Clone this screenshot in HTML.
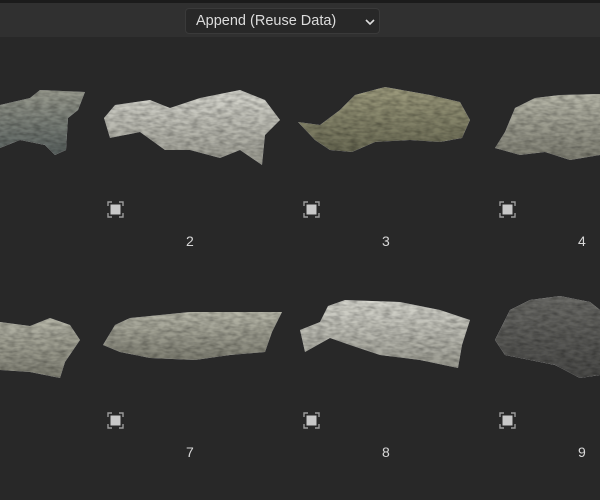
<!DOCTYPE html>
<html><head><meta charset="utf-8"><style>
html,body{margin:0;padding:0;width:600px;height:500px;overflow:hidden;background:#282828;font-family:"Liberation Sans","DejaVu Sans",sans-serif}
.top{position:absolute;left:0;top:0;width:600px;height:3px;background:#1b1b1b}
.hdr{position:absolute;left:0;top:3px;width:600px;height:34px;background:#303030}
.dd{position:absolute;left:185px;top:8px;width:195px;height:26px;background:#282828;border:1px solid #3a3a3a;border-radius:4px;box-sizing:border-box;color:#dcdcdc;font-size:14.5px;line-height:24px;padding-left:10px;white-space:nowrap}
.dd svg{position:absolute;right:4px;top:9px}
.ic{position:absolute;width:17px;height:17px}
.num{position:absolute;color:#d8d8d8;font-size:14px}
svg.t{position:absolute;left:0;top:0}
</style></head><body>
<div class="top"></div><div class="hdr"></div>
<div class="dd">Append (Reuse Data)<svg width="10" height="8"><path d="M1 2 L5 6 L9 2" stroke="#ddd" stroke-width="1.6" fill="none"/></svg></div>
<svg class="t" width="600" height="500">
<defs>
<linearGradient id="g1" x1="0" y1="0" x2="0" y2="1"><stop offset="0" stop-color="#9a9c90"/><stop offset="1" stop-color="#5a6260"/></linearGradient>
<linearGradient id="g2" x1="0" y1="0" x2="0" y2="1"><stop offset="0" stop-color="#d8d8d0"/><stop offset="1" stop-color="#9a9a90"/></linearGradient>
<linearGradient id="g3" x1="0" y1="0" x2="0" y2="1"><stop offset="0" stop-color="#9e9c7e"/><stop offset="1" stop-color="#6a6a54"/></linearGradient>
<linearGradient id="g4" x1="0" y1="0" x2="0" y2="1"><stop offset="0" stop-color="#b8b8aa"/><stop offset="1" stop-color="#7e7e72"/></linearGradient>
<linearGradient id="g5" x1="0" y1="0" x2="0" y2="1"><stop offset="0" stop-color="#6c6c68"/><stop offset="1" stop-color="#4a4a48"/></linearGradient>
<filter id="n" x="0" y="0" width="100%" height="100%"><feTurbulence type="fractalNoise" baseFrequency="0.12 0.3" numOctaves="2" seed="3" result="t"/><feColorMatrix in="t" type="matrix" values="0.9 0 0 0 0.35 0.9 0 0 0 0.35 0.9 0 0 0 0.35 0 0 0 0 1" result="c"/><feBlend in="SourceGraphic" in2="c" mode="multiply" result="b"/><feComposite in="b" in2="SourceAlpha" operator="in"/></filter>
</defs>
<g filter="url(#n)">
<path d="M0 105 L30 98 L40 90 L85 92 L78 110 L68 118 L66 150 L55 155 L45 145 L20 140 L0 148Z" fill="url(#g1)"/>
<path d="M104 118 L115 105 L150 100 L170 108 L200 98 L240 90 L265 100 L280 120 L265 135 L262 165 L240 150 L220 158 L190 150 L165 150 L140 132 L110 138Z" fill="url(#g2)"/>
<path d="M298 122 L320 125 L340 110 L355 95 L385 87 L430 95 L460 102 L470 120 L462 138 L440 142 L410 140 L375 142 L352 152 L330 150 L315 140Z" fill="url(#g3)"/>
<path d="M495 148 L505 132 L515 108 L535 98 L560 95 L600 94 L600 155 L570 160 L545 152 L520 155Z" fill="url(#g4)"/>
<path d="M0 322 L30 326 L50 318 L70 325 L80 340 L65 362 L60 378 L30 372 L0 370Z" fill="url(#g4)"/>
<path d="M103 345 L115 325 L130 318 L190 312 L240 312 L282 312 L272 332 L265 352 L230 355 L195 360 L150 358 L120 352Z" fill="url(#g4)"/>
<path d="M300 330 L320 322 L328 306 L345 300 L400 302 L440 310 L470 320 L462 345 L458 368 L420 360 L380 355 L350 345 L330 338 L305 352Z" fill="url(#g2)"/>
<path d="M495 340 L510 310 L530 300 L560 296 L590 302 L600 310 L600 375 L580 378 L555 365 L530 360 L505 355Z" fill="url(#g5)"/>
</g>
</svg>
<svg class="ic" style="left:107px;top:201px" viewBox="0 0 17 17"><path d="M1 5V1H5M12 1H16V5M16 12V16H12M5 16H1V12" stroke="#9a9a9a" stroke-width="1.4" fill="none"/><rect x="3.5" y="3.5" width="10" height="10" fill="#c8c8c8"/></svg>
<svg class="ic" style="left:303px;top:201px" viewBox="0 0 17 17"><path d="M1 5V1H5M12 1H16V5M16 12V16H12M5 16H1V12" stroke="#9a9a9a" stroke-width="1.4" fill="none"/><rect x="3.5" y="3.5" width="10" height="10" fill="#c8c8c8"/></svg>
<svg class="ic" style="left:499px;top:201px" viewBox="0 0 17 17"><path d="M1 5V1H5M12 1H16V5M16 12V16H12M5 16H1V12" stroke="#9a9a9a" stroke-width="1.4" fill="none"/><rect x="3.5" y="3.5" width="10" height="10" fill="#c8c8c8"/></svg>
<svg class="ic" style="left:107px;top:412px" viewBox="0 0 17 17"><path d="M1 5V1H5M12 1H16V5M16 12V16H12M5 16H1V12" stroke="#9a9a9a" stroke-width="1.4" fill="none"/><rect x="3.5" y="3.5" width="10" height="10" fill="#c8c8c8"/></svg>
<svg class="ic" style="left:303px;top:412px" viewBox="0 0 17 17"><path d="M1 5V1H5M12 1H16V5M16 12V16H12M5 16H1V12" stroke="#9a9a9a" stroke-width="1.4" fill="none"/><rect x="3.5" y="3.5" width="10" height="10" fill="#c8c8c8"/></svg>
<svg class="ic" style="left:499px;top:412px" viewBox="0 0 17 17"><path d="M1 5V1H5M12 1H16V5M16 12V16H12M5 16H1V12" stroke="#9a9a9a" stroke-width="1.4" fill="none"/><rect x="3.5" y="3.5" width="10" height="10" fill="#c8c8c8"/></svg>
<div class="num" style="left:186px;top:233px">2</div>
<div class="num" style="left:382px;top:233px">3</div>
<div class="num" style="left:578px;top:233px">4</div>
<div class="num" style="left:186px;top:444px">7</div>
<div class="num" style="left:382px;top:444px">8</div>
<div class="num" style="left:578px;top:444px">9</div>
</body></html>
